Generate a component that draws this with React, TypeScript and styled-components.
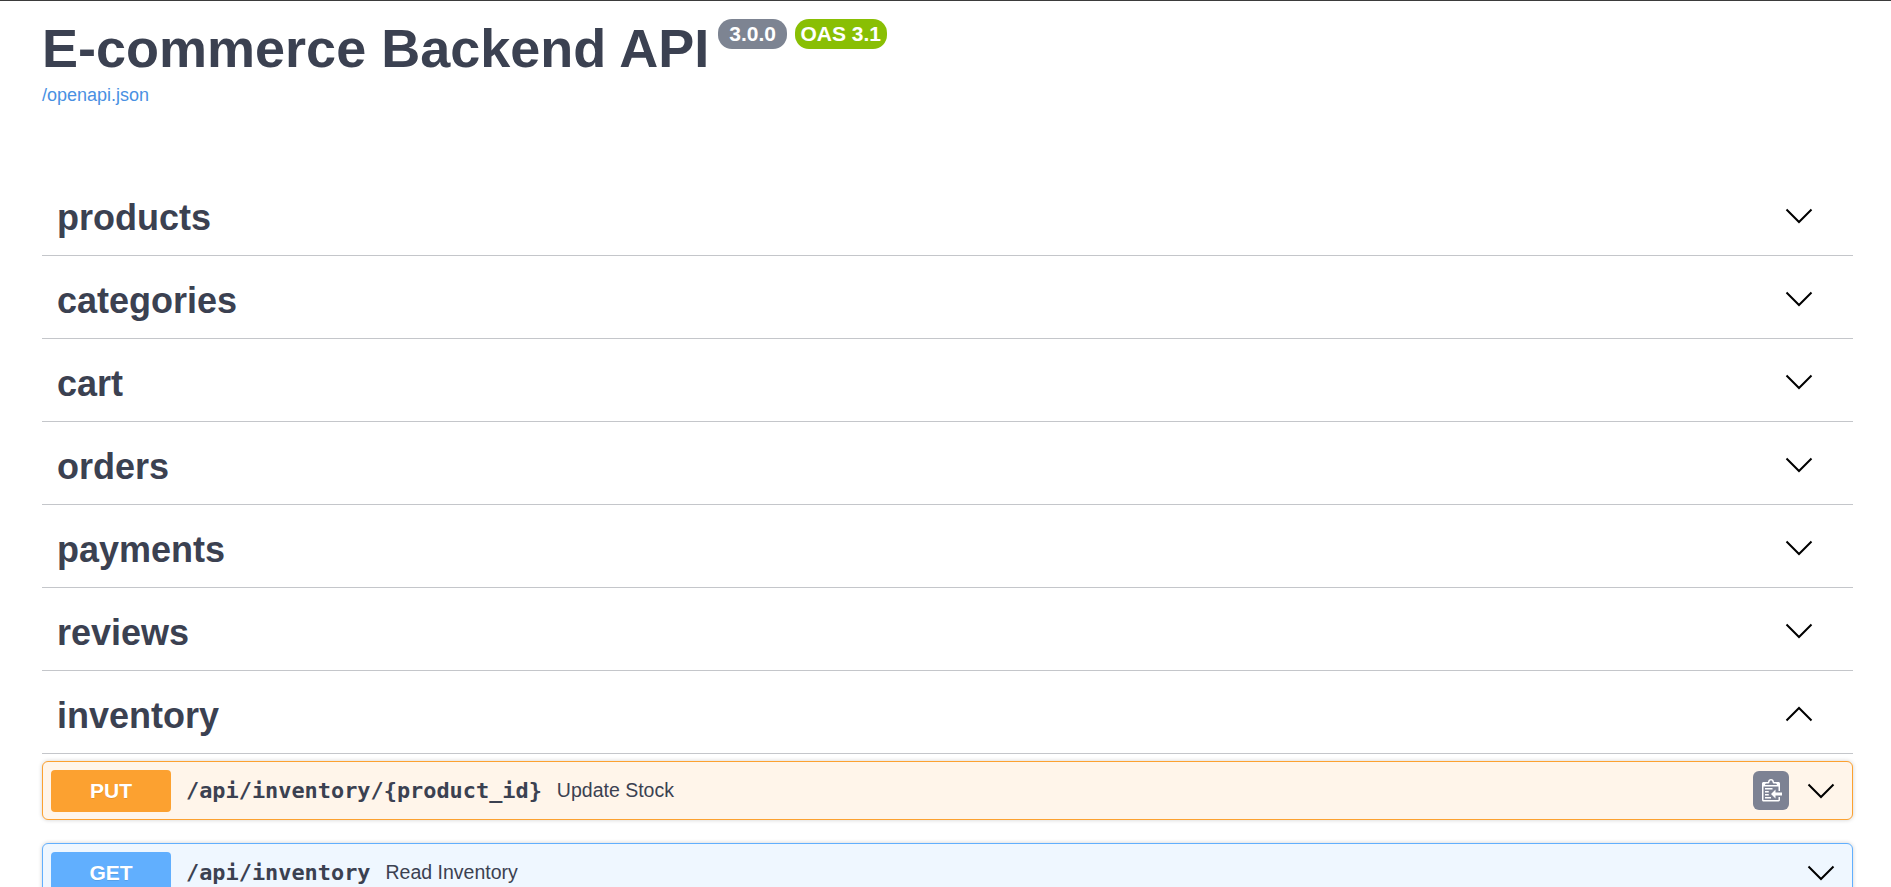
import * as React from "react";
import styled, { createGlobalStyle } from "styled-components";

const GlobalStyle = createGlobalStyle`
  html, body {
    background: #fff;
    height: 887px;
    margin: 0;
    overflow: hidden;
  }
  body {
    border-top: 1px solid #3b3b3b;
    box-sizing: border-box;
    font-family: "Liberation Sans", Arial, sans-serif;
  }
`;

const Wrapper = styled.div`
  padding: 0 38px 0 42px;
`;

const Info = styled.header`
  height: 172px;
  padding-top: 18px;
  box-sizing: border-box;
`;

const TitleRow = styled.div`
  align-items: flex-start;
  display: flex;
`;

const Title = styled.h2`
  color: #3b4151;
  font-size: 54px;
  font-weight: 700;
  line-height: 59px;
  margin: 0 9px 0 0;
`;

const Badge = styled.span<{ $color: string; $pad: number }>`
  background: ${(props) => props.$color};
  border-radius: 14px;
  box-sizing: border-box;
  color: #fff;
  font-size: 21px;
  font-weight: 700;
  height: 30px;
  line-height: 30px;
  margin-right: 8px;
  padding: 0 ${(props) => props.$pad}px;
`;

const SpecLink = styled.a`
  color: #4990e2;
  display: block;
  font-size: 18px;
  line-height: 24px;
  margin-top: 5px;
  text-decoration: none;
`;

const TagRow = styled.section`
  align-items: center;
  border-bottom: 1px solid rgba(59, 65, 81, 0.3);
  box-sizing: border-box;
  color: #3b4151;
  display: flex;
  height: 83px;
  justify-content: space-between;
  padding: 8px 40px 0 15px;

  & > svg {
    margin-bottom: 5px;
  }
`;

const TagName = styled.h3`
  font-size: 36px;
  font-weight: 700;
  margin: 0;
`;

const Operation = styled.div<{ $color: string; $tint: string }>`
  align-items: center;
  background: ${(props) => props.$tint};
  border: 1.5px solid ${(props) => props.$color};
  border-radius: 6px;
  box-shadow: 0 0 4px rgba(0, 0, 0, 0.19);
  box-sizing: border-box;
  display: flex;
  height: 59px;
  margin: 7px 0 23px;
  padding: 0 17.5px 0 8px;
`;

const Method = styled.span<{ $color: string }>`
  background: ${(props) => props.$color};
  border-radius: 4px;
  color: #fff;
  flex: none;
  font-size: 21px;
  font-weight: 700;
  height: 42px;
  line-height: 42px;
  text-align: center;
  text-shadow: 0 1px 0 rgba(0, 0, 0, 0.1);
  width: 120px;
`;

const Path = styled.span`
  color: #3b4151;
  font-family: "DejaVu Sans Mono", monospace;
  font-size: 21.9px;
  font-weight: 700;
  margin-left: 15px;
`;

const Summary = styled.span`
  color: #3b4151;
  flex: 1;
  font-size: 19.5px;
  margin-left: 15px;
`;

const CopyButton = styled.button`
  align-items: center;
  background: #7d8293;
  border: none;
  border-radius: 6px;
  display: flex;
  height: 39px;
  justify-content: center;
  margin-right: 18px;
  padding: 0;
  width: 36px;
`;

function Chevron({ up }: { up?: boolean }) {
  return (
    <svg width="28" height="16" viewBox="0 0 28 16" fill="none">
      <polyline
        points={up ? "1.5,14.5 14,2 26.5,14.5" : "1.5,1.5 14,14 26.5,1.5"}
        stroke="#000"
        strokeWidth="2"
      />
    </svg>
  );
}

function ClipboardIcon() {
  return (
    <svg width="22.5" height="24" viewBox="0 0 15 16">
      <g transform="translate(2, -1)">
        <path
          fill="#fff"
          fillRule="evenodd"
          d="M2 13h4v1H2v-1zm5-6H2v1h5V7zm2 3V8l-3 3 3 3v-2h5v-2H9zM4.5 9H2v1h2.5V9zM2 12h2.5v-1H2v1zm9 1h1v2c-.02.28-.11.52-.3.7-.19.18-.42.28-.7.3H1c-.55 0-1-.45-1-1V4c0-.55.45-1 1-1h3c0-1.11.89-2 2-2 1.11 0 2 .89 2 2h3c.55 0 1 .45 1 1v5h-1V6H1v9h10v-2zM2 5h8c0-.55-.45-1-1-1H8c-.55 0-1-.45-1-1s-.45-1-1-1-1 .45-1 1-.45 1-1 1H3c-.55 0-1 .45-1 1z"
        />
      </g>
    </svg>
  );
}

const collapsedTags = ["products", "categories", "cart", "orders", "payments", "reviews"];

export default function App() {
  return (
    <Wrapper>
      <GlobalStyle />

      <Info>
        <TitleRow>
          <Title>E-commerce Backend API</Title>
          <Badge $color="#7d8492" $pad={11}>3.0.0</Badge>
          <Badge $color="#89bf04" $pad={5.5}>OAS 3.1</Badge>
        </TitleRow>
        <SpecLink href="#">/openapi.json</SpecLink>
      </Info>

      {collapsedTags.map((tag) => (
        <TagRow key={tag}>
          <TagName>{tag}</TagName>
          <Chevron />
        </TagRow>
      ))}

      <TagRow>
        <TagName>inventory</TagName>
        <Chevron up />
      </TagRow>

      <Operation $color="#fca130" $tint="#fff5ea">
        <Method $color="#fca130">PUT</Method>
        <Path>/api/inventory/{"{product_id}"}</Path>
        <Summary>Update Stock</Summary>
        <CopyButton>
          <ClipboardIcon />
        </CopyButton>
        <Chevron />
      </Operation>

      <Operation $color="#61affe" $tint="#eff7ff">
        <Method $color="#61affe">GET</Method>
        <Path>/api/inventory</Path>
        <Summary>Read Inventory</Summary>
        <Chevron />
      </Operation>
    </Wrapper>
  );
}
